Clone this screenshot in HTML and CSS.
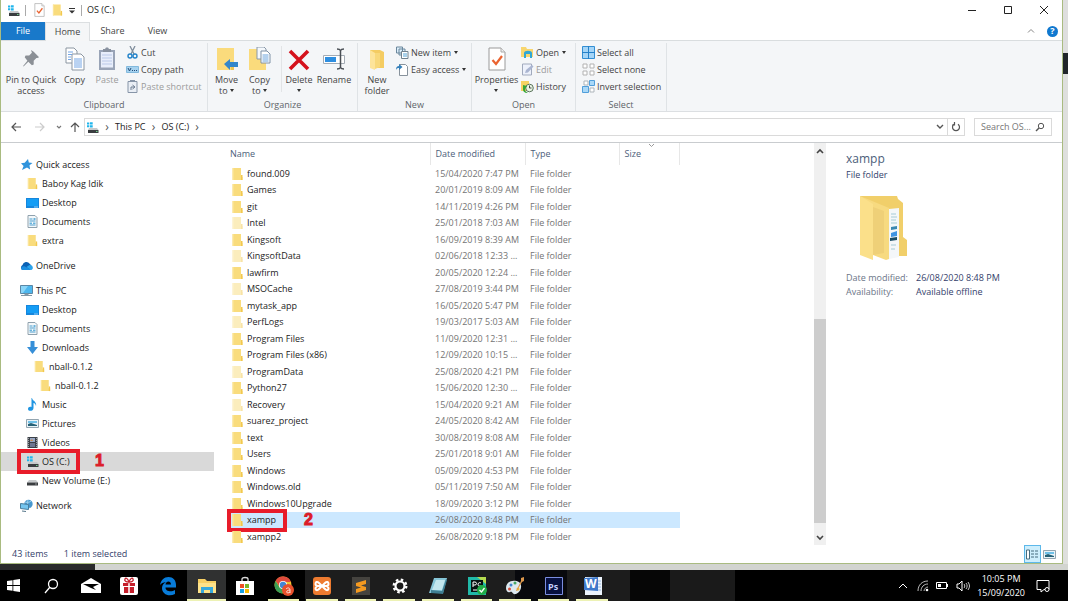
FILE: index.html
```html
<!DOCTYPE html>
<html lang="en">
<head>
<meta charset="utf-8">
<title>OS (C:)</title>
<link rel="stylesheet" href="styles.css">
</head>
<body>
<svg class="sprite" aria-hidden="true">
  <symbol id="folder" viewBox="0 0 12 14"><path d="M1 1h8.500v9H11v3H1z" fill="#f9dc7d"/><path d="M9.500 8h1.500v5H9.500z" fill="#f2c84f"/><path d="M1 1h1v12H1z" fill="#fbe7a2"/></symbol>
  <symbol id="drive" viewBox="0 0 13 13"><path d="M1 1.500h2.300v2H1zM4 1.200h2.700v2.300H4zM1 4.200h2.300v2H1zM4 4.200h2.700v2.300H4z" fill="#20b5ec"/><path d="M3 7h8l1.500 2H2z" fill="#c6c9cb"/><path d="M2 9h10.500v3H2z" fill="#3a3d40"/><path d="M10 10h1.500v1H10z" fill="#6fd18a"/></symbol>
  <symbol id="disk" viewBox="0 0 13 13"><path d="M3 6h7l2 2.500H1z" fill="#c6c9cb"/><path d="M1 8.500h11v3H1z" fill="#3a3d40"/><path d="M9 9.500h2v1H9z" fill="#8d9194"/></symbol>
  <symbol id="desktop" viewBox="0 0 13 13"><path d="M0 2h13v10H0z" fill="#1686dc"/><path d="M1 3h11v7H1z" fill="#149df5"/><path d="M8 10.500h4v1H8z" fill="#8ed0ff"/></symbol>
  <symbol id="document" viewBox="0 0 12 13"><path d="M1.500.5h7l2 2v10h-9z" fill="#f4f8fa" stroke="#8fa1ad"/><path d="M3 4h3M3 6h6M3 10h6" stroke="#4a9dce"/><path d="M3 7.500h2.500v1.500H3zM7 3h2v2H7zM6.500 7.500H9V9H6.500z" fill="#68b3dc"/></symbol>
  <symbol id="pc" viewBox="0 0 13 13"><path d="M.5 1.500h12v8H.5z" fill="#4db7ee" stroke="#5b87a5"/><path d="M1 2h7L3 9H1z" fill="#8ad5f8"/><path d="M5 10h3v1H5zM1 11.500h11" stroke="#8298a6" fill="#8298a6"/></symbol>
  <symbol id="star" viewBox="0 0 13 13"><path d="M8 1l.8 3.500 3.700.6-3 2.200.6 4.200-3.100-2.100L2 12l1.600-4L1 5.200l3.700-.5z" fill="#2f93dc"/></symbol>
  <symbol id="cloud" viewBox="0 0 13 13"><path d="M2.500 6a4 4 0 0 1 7.200-1.200A3.800 3.800 0 0 1 10 11H3a2.700 2.700 0 0 1-.5-5z" fill="#0a61b5"/><path d="M1 10c0-2 2-3.500 4-2.600L11.500 11H3a2 2 0 0 1-2-1z" fill="#1c8ee0"/><path d="M6.500 8l3-2c2.500-.4 4 2 3 4-.4.700-1 1-1.500 1z" fill="#2ba4ec"/></symbol>
  <symbol id="download" viewBox="0 0 13 13"><path d="M4.500 0h4v6H12l-5.500 7L1 6h3.500z" fill="#368fd8"/></symbol>
  <symbol id="music" viewBox="0 0 13 13"><path d="M6 0c.5 3 5 3.500 4 8-.3-2-1.500-2.800-2.500-3V10c0 3.500-5.500 3.700-5.500 1C2 9 4 8.300 5.500 9V0z" fill="#1f95e2"/></symbol>
  <symbol id="picture" viewBox="0 0 13 13"><path d="M.5 2.500h12v8H.5z" fill="#e9f3f8" stroke="#93a5b0"/><path d="M2 4h9v2H2z" fill="#6ec0e8"/><path d="M2 7l3-1 6 2v1H2z" fill="#246177"/></symbol>
  <symbol id="video" viewBox="0 0 13 13"><path d="M1.500 1h10v11h-10z" fill="#3c4148"/><path d="M4 2h5v4H4z" fill="#98a7c5"/><path d="M4 7h5v4H4z" fill="#6d7590"/><path d="M2.500 2v9M10.500 2v9" stroke="#9ba0a6" stroke-dasharray="1 1"/><path d="M4 5l2-2 1 2z" fill="#c88a4a"/></symbol>
  <symbol id="network" viewBox="0 0 13 13"><circle cx="8.500" cy="5" r="4.200" fill="#4898cf"/><path d="M5 3c3 1 5 0 6-1M8 1c-1 3 0 6 1 8" stroke="#9ed3ee" fill="none"/><path d="M.5 4.500l8 1v5l-8-1z" fill="#74c5ef" stroke="#487d9d"/><path d="M2 12l4 .5" stroke="#57788b"/></symbol>
  <symbol id="check" viewBox="0 0 18 24"><path d="M1 1h12l4 4v18H1z" fill="#fff" stroke="#9a9a9a"/><path d="M13 1v4h4" fill="#eee" stroke="#aaa"/><path d="M4.500 13l3.500 4 6-8" fill="none" stroke="#ea6330" stroke-width="2.200"/></symbol>
  <symbol id="pages" viewBox="0 0 20 24"><g fill="#fff" stroke="#8b96a1"><path d="M1 1h8l3 3v12H1z"/><path d="M7 7h9l3 3v13H7z"/></g><path d="M3 5h5M3 7.500h4M3 10h3M3 12.500h3M9 12h8M9 14h8M9 16h8M9 18h8M9 20h8" stroke="#75a6e5" fill="none"/></symbol>
</svg>

<div class="desktop">
  <div class="window">
    <header class="titlebar">
      <svg class="i13"><use href="#drive"/></svg><span class="vsep"></span>
      <button aria-label="Properties"><svg class="qa"><use href="#check"/></svg></button>
      <button aria-label="New folder"><svg class="qa"><use href="#folder"/></svg></button>
      <button class="more" aria-label="Customize toolbar"><svg width="6" height="7"><path d="M0 1.500h6" stroke="#333"/><path d="M0 3.500h6L3 6.500z" fill="#333"/></svg></button>
      <span class="vsep last"></span><h1>OS (C:)</h1>
      <div class="controls">
        <button aria-label="Minimize"><svg width="10" height="10"><path d="M1 5.500h8" stroke="#222"/></svg></button>
        <button aria-label="Maximize"><svg width="10" height="10"><path d="M1.500 1.500h7v7h-7z" stroke="#222" fill="none"/></svg></button>
        <button aria-label="Close"><svg width="10" height="10"><path d="M1 1l8 8M9 1L1 9" stroke="#222"/></svg></button>
      </div>
    </header>

    <nav class="tabs">
      <button class="file">File</button><button class="on">Home</button><button>Share</button><button>View</button>
      <div class="tabend">
        <button aria-label="Collapse ribbon"><svg width="8" height="6"><path d="M1 4.500l3-3 3 3" stroke="#888" fill="none"/></svg></button>
        <button class="help" aria-label="Help">?</button>
      </div>
    </nav>

    <section class="ribbon">
      <div class="group clipboard">
        <div class="tools">
          <button class="big pin"><svg viewBox="0 0 20 24"><path d="M13 4l6 6-2 1-1 0-3 3 0 4-2 1-4-4-5 5-1 0 5-6-3-4 1-2h4l3-3-1-3z" fill="#8b9096"/></svg><span>Pin to Quick<br>access</span></button>
          <button class="big copy"><svg><use href="#pages"/></svg><span>Copy</span></button>
          <button class="big paste" disabled><svg viewBox="0 0 20 24"><path d="M2 3h16v20H2z" fill="#99a4b7"/><path d="M4 5h12v15.500H4z" fill="#e8eefb"/><path d="M6 2h2l1-1.500h2L12 2h2v3H6z" fill="#8992a0"/><path d="M5 8h10M5 11h10M5 14h10M5 17h10" stroke="#bac9e8"/></svg><span>Paste</span></button>
          <div class="small">
            <button><svg viewBox="0 0 13 13"><path d="M4 0l4 8M9 0L5 8" stroke="#7f8d9c" stroke-width="1.300"/><g fill="none" stroke="#2483c9" stroke-width="1.400"><circle cx="4" cy="10" r="2"/><circle cx="9" cy="10" r="2"/></g></svg>Cut</button>
            <button><svg viewBox="0 0 13 13"><path d="M.5 3.500h12v6H.5z" fill="#a6d2ef" stroke="#82b9dd"/><path d="M2 5l1.500 3L5 5M6 7.500h1M8 7.500h1M10 7.500h1" stroke="#234d78" fill="none"/></svg>Copy path</button>
            <button disabled><svg viewBox="0 0 13 13"><path d="M2 1.500h9v11H2z" fill="#e9eef5" stroke="#8795a8"/><path d="M4 0h5v2H4z" fill="#8795a8"/><path d="M5 10V7h3M6.500 5L9 7 6.500 9" stroke="#6d7c90" fill="none"/></svg>Paste shortcut</button>
          </div>
        </div><h2>Clipboard</h2>
      </div>
      <div class="group organize">
        <div class="tools">
          <button class="big move"><svg viewBox="0 0 22 24"><path d="M1 1h17v22H1z" fill="#fadb7c"/><path d="M15 17h3v6h-3z" fill="#efc550"/><path d="M8 17l6-5v3h8v5h-8v3z" fill="#3387cb"/></svg><span>Move<br>to <i></i></span></button>
          <button class="big copyto"><svg viewBox="0 0 22 24"><path d="M0 2h17v21H0z" fill="#fadb7c"/><path d="M8 0h7l2 2v10H8z" fill="#f4f8fc" stroke="#8998a8"/><path d="M12 4h6l3 3v9h-9z" fill="#fff" stroke="#7e91a6"/><path d="M13.500 8h6M13.500 10h6M13.500 12h6M13.500 14h6" stroke="#6aa3dc"/></svg><span>Copy<br>to <i></i></span></button>
          <span class="toolsep"></span>
          <button class="big delete"><svg viewBox="0 0 22 24"><path d="M2 4l18 18M20 4L2 22" stroke="#d5121c" stroke-width="3.600"/></svg><span>Delete<br><i></i></span></button>
          <button class="big rename"><svg viewBox="0 0 22 24"><path d="M.5 8.500h21v8H.5z" fill="#fff" stroke="#a4acb5"/><path d="M2 10h11v5H2z" fill="#2e8ee0"/><path d="M14 2c2 0 3 .5 3.500 1.500C18 2.500 19 2 21 2M17.500 3v18M14 22c2 0 3-.5 3.500-1.500.5 1 1.500 1.500 3.500 1.500" stroke="#4a4f55" stroke-width="1.500" fill="none"/></svg><span>Rename</span></button>
        </div><h2>Organize</h2>
      </div>
      <div class="group new">
        <div class="tools">
          <button class="big"><svg viewBox="0 0 20 24"><path d="M3 3h10l4 2v16H3z" fill="#f4cc62"/><path d="M3 3l5 3v17l-5-2z" fill="#fde49a"/><path d="M8 6h5v14l-5 2z" fill="#f8d87a"/></svg><span>New<br>folder</span></button>
          <div class="small">
            <button><svg viewBox="0 0 13 13"><path d="M.5 1h6v6h-6zM3 3h6v6H3z" fill="#dceefa" stroke="#6a879c"/><path d="M5.500 5.500h6.500v7H5.500z" fill="#fff" stroke="#71828e"/><path d="M7 8h4M7 10h4" stroke="#54a4d6"/></svg>New item <i></i></button>
            <button><svg viewBox="0 0 13 13"><path d="M3.500 1.500h6l2 2v9h-8z" fill="#fff" stroke="#87929c"/><path d="M0 7c0-3 1-4 3-4V1l3.500 3L3 7V5C2 5 1 5 0 7z" fill="#337fb9"/></svg>Easy access <i></i></button>
          </div>
        </div><h2>New</h2>
      </div>
      <div class="group open">
        <div class="tools">
          <button class="big props"><svg><use href="#check"/></svg><span>Properties<br><i></i></span></button>
          <div class="small">
            <button><svg viewBox="0 0 13 13"><path d="M0 1h5l1 2h6v8H0z" fill="#f8d66f"/><path d="M3 12V7c0-3 8-3 8 0v5H9V8H5v4z" fill="#31a6d4"/></svg>Open <i></i></button>
            <button disabled><svg viewBox="0 0 13 13"><path d="M1.500 1h9v11h-9z" fill="#edf1fb" stroke="#a1aabd"/><path d="M4 10l1-3 6-5 1.500 1.500-5.500 6z" fill="#aab5d1"/></svg>Edit</button>
            <button><svg viewBox="0 0 13 13"><path d="M0 1h8v10H0z" fill="#f6d263"/><circle cx="8.500" cy="8" r="3.800" fill="#e9f5e4" stroke="#5a735b"/><path d="M8.500 5.500V8h2" stroke="#444" fill="none"/><path d="M2 5l4 1-2 3c0 2 1 3 3 4-4 0-5-2-5-4z" fill="#35a537"/></svg>History</button>
          </div>
        </div><h2>Open</h2>
      </div>
      <div class="group select">
        <div class="tools"><div class="small">
          <button><svg viewBox="0 0 13 13"><path d="M.5.5h12v12H.5z" fill="#a5d5f7" stroke="#338fd3"/><path d="M6.500 0v13M0 6.500h13" stroke="#2581c9"/></svg>Select all</button>
          <button><svg viewBox="0 0 13 13"><g fill="#fff" stroke="#b2b2b2"><path d="M1 1h4v4H1zM8 1h4v4H8zM1 8h4v4H1zM8 8h4v4H8z"/></g></svg>Select none</button>
          <button><svg viewBox="0 0 13 13"><path d="M2 1h4v4H2zM8 8h4v4H8z" fill="#fff" stroke="#adb5bb"/><path d="M7.500.5h5v5h-5zM.5 6.500h6v6h-6z" fill="#a9d8f8" stroke="#519fda"/></svg>Invert selection</button>
        </div></div><h2>Select</h2>
      </div>
    </section>

    <div class="address">
      <button aria-label="Back"><svg width="11" height="10"><path d="M10 5H1M5 1L1 5l4 4" fill="none" stroke="#555" stroke-width="1.200"/></svg></button>
      <button aria-label="Forward"><svg width="11" height="10"><path d="M1 5h9M6 1l4 4-4 4" fill="none" stroke="#ccc" stroke-width="1.200"/></svg></button>
      <button aria-label="Recent locations"><svg width="6" height="5"><path d="M1 1l2 2 2-2" fill="none" stroke="#777" stroke-width="1.200"/></svg></button>
      <button aria-label="Up"><svg width="10" height="10"><path d="M5 10V1M1 5l4-4 4 4" fill="none" stroke="#555" stroke-width="1.200"/></svg></button>
      <div class="path">
        <svg class="i13"><use href="#drive"/></svg><b>›</b><a href="#pc">This PC</a><b>›</b><a href="#c">OS (C:)</a><b>›</b>
        <button class="drop" aria-label="Previous locations"><svg width="8" height="6"><path d="M1 1l3 3 3-3" fill="none" stroke="#555" stroke-width="1.400"/></svg></button>
        <button class="refresh" aria-label="Refresh"><svg width="10" height="10"><path d="M7 2.300A3.500 3.500 0 1 1 3 2.300M3.500 0v3H1" fill="none" stroke="#555" stroke-width="1.200"/></svg></button>
      </div>
      <label class="search"><input type="text" aria-label="Search" placeholder="Search OS..."><svg width="10" height="10"><circle cx="6" cy="4" r="2.700" fill="none" stroke="#555"/><path d="M4 6L1 9" stroke="#555" stroke-width="1.400"/></svg></label>
    </div>

    <main>
      <nav class="tree">
        <a href="#q"><svg><use href="#star"/></svg>Quick access</a>
        <a class="l1" href="#b"><svg><use href="#folder"/></svg>Baboy Kag Idik</a>
        <a class="l1" href="#d"><svg><use href="#desktop"/></svg>Desktop</a>
        <a class="l1" href="#doc"><svg><use href="#document"/></svg>Documents</a>
        <a class="l1" href="#e"><svg><use href="#folder"/></svg>extra</a>
        <a class="top" href="#o"><svg><use href="#cloud"/></svg>OneDrive</a>
        <a class="top" href="#pc"><svg><use href="#pc"/></svg>This PC</a>
        <a class="l1" href="#d"><svg><use href="#desktop"/></svg>Desktop</a>
        <a class="l1" href="#doc"><svg><use href="#document"/></svg>Documents</a>
        <a class="l1" href="#dl"><svg><use href="#download"/></svg>Downloads</a>
        <a class="l2" href="#n"><svg><use href="#folder"/></svg>nball-0.1.2</a>
        <a class="l3" href="#n"><svg><use href="#folder"/></svg>nball-0.1.2</a>
        <a class="l1" href="#m"><svg><use href="#music"/></svg>Music</a>
        <a class="l1" href="#p"><svg><use href="#picture"/></svg>Pictures</a>
        <a class="l1" href="#v"><svg><use href="#video"/></svg>Videos</a>
        <a class="l1 current" href="#c"><svg><use href="#drive"/></svg>OS (C:)<span class="mark one"></span><strong class="num n1">1</strong></a>
        <a class="l1" href="#ev"><svg><use href="#disk"/></svg>New Volume (E:)</a>
        <a class="top" href="#net"><svg><use href="#network"/></svg>Network</a>
      </nav>

      <section class="list">
        <table>
          <thead><tr><th class="cn">Name</th><th class="cd">Date modified</th><th class="ct">Type</th><th class="cs">Size<svg class="sort" width="7" height="4"><path d="M1 0l2.500 2.500L6 0" fill="none" stroke="#999"/></svg></th></tr></thead>
          <tbody>
            <tr><td><svg><use href="#folder"/></svg>found.009</td><td>15/04/2020 7:47 PM</td><td>File folder</td><td></td></tr>
            <tr><td><svg><use href="#folder"/></svg>Games</td><td>20/01/2019 8:09 AM</td><td>File folder</td><td></td></tr>
            <tr><td><svg><use href="#folder"/></svg>git</td><td>14/11/2019 4:26 PM</td><td>File folder</td><td></td></tr>
            <tr class="dim"><td><svg><use href="#folder"/></svg>Intel</td><td>25/01/2018 7:03 AM</td><td>File folder</td><td></td></tr>
            <tr><td><svg><use href="#folder"/></svg>Kingsoft</td><td>16/09/2019 8:39 AM</td><td>File folder</td><td></td></tr>
            <tr class="dim"><td><svg><use href="#folder"/></svg>KingsoftData</td><td>02/06/2018 12:33 ...</td><td>File folder</td><td></td></tr>
            <tr><td><svg><use href="#folder"/></svg>lawfirm</td><td>20/05/2020 12:24 ...</td><td>File folder</td><td></td></tr>
            <tr class="dim"><td><svg><use href="#folder"/></svg>MSOCache</td><td>27/08/2019 3:44 PM</td><td>File folder</td><td></td></tr>
            <tr><td><svg><use href="#folder"/></svg>mytask_app</td><td>16/05/2020 5:47 PM</td><td>File folder</td><td></td></tr>
            <tr class="dim"><td><svg><use href="#folder"/></svg>PerfLogs</td><td>19/03/2017 5:03 AM</td><td>File folder</td><td></td></tr>
            <tr><td><svg><use href="#folder"/></svg>Program Files</td><td>11/09/2020 12:31 ...</td><td>File folder</td><td></td></tr>
            <tr><td><svg><use href="#folder"/></svg>Program Files (x86)</td><td>12/09/2020 10:15 ...</td><td>File folder</td><td></td></tr>
            <tr class="dim"><td><svg><use href="#folder"/></svg>ProgramData</td><td>25/08/2020 4:21 PM</td><td>File folder</td><td></td></tr>
            <tr><td><svg><use href="#folder"/></svg>Python27</td><td>15/06/2020 12:30 ...</td><td>File folder</td><td></td></tr>
            <tr class="dim"><td><svg><use href="#folder"/></svg>Recovery</td><td>15/04/2020 9:21 AM</td><td>File folder</td><td></td></tr>
            <tr><td><svg><use href="#folder"/></svg>suarez_project</td><td>24/05/2020 8:42 AM</td><td>File folder</td><td></td></tr>
            <tr><td><svg><use href="#folder"/></svg>text</td><td>30/08/2019 8:08 AM</td><td>File folder</td><td></td></tr>
            <tr><td><svg><use href="#folder"/></svg>Users</td><td>25/01/2018 9:01 AM</td><td>File folder</td><td></td></tr>
            <tr><td><svg><use href="#folder"/></svg>Windows</td><td>05/09/2020 4:53 PM</td><td>File folder</td><td></td></tr>
            <tr><td><svg><use href="#folder"/></svg>Windows.old</td><td>05/11/2019 7:50 AM</td><td>File folder</td><td></td></tr>
            <tr><td><svg><use href="#folder"/></svg>Windows10Upgrade</td><td>18/09/2020 3:12 PM</td><td>File folder</td><td></td></tr>
            <tr class="selected"><td><svg><use href="#folder"/></svg>xampp<span class="mark two"></span><strong class="num n2">2</strong></td><td>26/08/2020 8:48 PM</td><td>File folder</td><td></td></tr>
            <tr><td><svg><use href="#folder"/></svg>xampp2</td><td>26/08/2020 9:18 PM</td><td>File folder</td><td></td></tr>
          </tbody>
        </table>
      </section>

      <div class="scroll">
        <button aria-label="Scroll up"><svg width="8" height="6"><path d="M1 5l3-3 3 3" fill="none" stroke="#444" stroke-width="1.600"/></svg></button>
        <div class="track"><div class="thumb"></div></div>
        <button aria-label="Scroll down"><svg width="8" height="6"><path d="M1 1l3 3 3-3" fill="none" stroke="#444" stroke-width="1.600"/></svg></button>
      </div>

      <aside class="details">
        <h2>xampp</h2>
        <p>File folder</p>
        <svg viewBox="0 0 50 66"><path d="M2 1h37l1 3 5 4v34l4 3v16H26z" fill="#f1cf6a"/><path d="M31 14l10-1v49l-10 2z" fill="#f4f7f9"/><path d="M33 19h5M33 22h6M33 25h5M33 28h6M33 50h5M33 54h4" stroke="#a6cbd6"/><path d="M33 32l6-1v3l-6 1z" fill="#3a88b2"/><path d="M33 38l6-2v5l-6 1z" fill="#3d94e2"/><path d="M32 43l7-1v3l-7 1z" fill="#194d66"/><path d="M2 1l29 12v51l-3 1-13-5z" fill="#f7da80"/><path d="M2 1l13 8v56L2 60z" fill="#fbe08a"/><path d="M15 12l11 4v42l-11 2z" fill="#efd078"/></svg>
        <dl><dt>Date modified:</dt><dd>26/08/2020 8:48 PM</dd><dt>Availability:</dt><dd>Available offline</dd></dl>
      </aside>
    </main>

    <footer class="status">
      <span>43 items</span><span>1 item selected</span>
      <div class="views">
        <button class="active" aria-label="Details view"><svg width="13" height="11"><path d="M.5 1h3v9h-3zM5 2h3M5 5h3M5 8h3M9 2h3M9 5h3M9 8h3" stroke="#466c7e" fill="#fff"/></svg></button>
        <button aria-label="Large icons view"><svg class="i13"><use href="#picture"/></svg></button>
      </div>
    </footer>
  </div>
  <div class="behind"></div>
</div>

<div class="taskbar">
  <button class="start" aria-label="Start"><svg width="13" height="13" viewBox="0 0 13 13"><path d="M0 2l5.500-.8V6H0zM6.300 1L13 0v6H6.300zM0 7h5.500v4.800L0 11zM6.300 7H13v6l-6.700-1z" fill="#fff"/></svg></button>
  <div class="apps">
    <button aria-label="Search"><svg viewBox="0 0 20 20"><circle cx="11" cy="8" r="4.500" fill="none" stroke="#fff" stroke-width="1.300"/><path d="M8 11l-5 6" stroke="#fff" stroke-width="1.300"/></svg></button>
    <button aria-label="Mail"><svg viewBox="0 0 20 20"><path d="M0 8l10-6 10 6v9H0z" fill="#fff"/><path d="M2 8h16l-6 3 3 3-5-2z" fill="#000"/></svg></button>
    <button aria-label="Gifts"><svg viewBox="0 0 20 20"><rect x="1" y="1" width="18" height="18" rx="2" fill="#fff"/><path d="M4 7h12v3H4zM5 11h10v6H5z" fill="#c51f2c"/><path d="M10 7v10" stroke="#fff" stroke-width="1.500"/><path d="M10 6C7 6 5 5 6 3s3 0 4 3c1-3 3-5 4-3s-1 3-4 3z" fill="none" stroke="#c51f2c" stroke-width="1.300"/></svg></button>
    <button aria-label="Edge"><svg viewBox="0 0 20 20"><path d="M2 9C3 4 6 1 10.500 1 15 1 18 4 18 9v2.500H7.500c0 4 6 5 9.500 2.500v4c-6 3-13 .5-13-6 0-3 2-5 4-6-3 .4-5 1.500-6 3zm5.500-.5H13c0-4-5-4-5.500 0z" fill="#087bd8"/></svg></button>
    <button class="focus" aria-label="File Explorer"><svg viewBox="0 0 20 20"><path d="M1 3h7l2 2h9v12H1z" fill="#f6cf64"/><path d="M1 7h18v10H1z" fill="#fde28a"/><path d="M4 17v-6h12v6h-3v-3H7v3z" fill="#36a9dd"/></svg></button>
    <button aria-label="Store"><svg viewBox="0 0 20 20"><path d="M7 6V3c0-2 6-2 6 0v3" fill="none" stroke="#ddd" stroke-width="1.300"/><path d="M1 5h18v14H1z" fill="#fff"/><path d="M5 8h4v4H5z" fill="#ee5125"/><path d="M10 8h4v4h-4z" fill="#79b729"/><path d="M5 13h4v4H5z" fill="#169fe3"/><path d="M10 13h4v4h-4z" fill="#fbb900"/></svg></button>
    <button class="run" aria-label="Chrome"><svg viewBox="0 0 20 20"><circle cx="9" cy="9" r="8.500" fill="#efc32e"/><path d="M1.600 5A8.500 8.500 0 0 1 17 6H9L6 11z" fill="#df4b3d"/><path d="M1.600 5A8.500 8.500 0 0 0 8 17.500l4-5.500H6z" fill="#3a9f55"/><circle cx="9" cy="9" r="4" fill="#fff"/><circle cx="9" cy="9" r="3.200" fill="#4285d4"/><circle cx="14" cy="14" r="6" fill="#e8502c"/><path d="M12 13c2-2 4-1 4 1v3M16 14c-4 0-4 3-2 3l2-1" stroke="#fff" fill="none" stroke-width=".8"/></svg></button>
    <button class="run" aria-label="XAMPP"><svg viewBox="0 0 20 20"><rect x="1" y="1" width="18" height="18" rx="3" fill="#ee7b30"/><path d="M10 10L7 7C5 5 3.500 6 3.500 8S5 10 6 10h8c1 0 2.500 0 2.500-2S15 5 13 7l-6 6c-2 2-3.500 1-3.500-.5S5 10 6 10h8c1 0 2.500 1 2.500 2.500S15 15 13 13z" fill="none" stroke="#fff" stroke-width="2"/></svg></button>
    <button class="run" aria-label="Sublime Text"><svg viewBox="0 0 20 20"><path d="M1 1h18v18H1z" fill="#45433f"/><path d="M15 4v4l-5 1.500 5 1.500v3L5 17v-4l5-1.500L5 10V7z" fill="#f59a20"/></svg></button>
    <button class="run" aria-label="Settings"><svg viewBox="0 0 20 20"><circle cx="10" cy="10" r="4.500" fill="none" stroke="#fff" stroke-width="2.200"/><circle cx="10" cy="10" r="6.300" fill="none" stroke="#fff" stroke-width="2.300" stroke-dasharray="2.500 2.448"/></svg></button>
    <button class="run" aria-label="Notepad"><svg viewBox="0 0 20 20"><path d="M6 2h13l-4 15H1z" fill="#87c6d8"/><path d="M8 4h9l-3 10H4z" fill="#c3e7ee"/><path d="M3 14l11 1 4-12 1 1-4 14-12-1z" fill="#407f93"/></svg></button>
    <button class="run" aria-label="PyCharm"><svg viewBox="0 0 20 20"><path d="M1 1h18v18H1z" fill="#21b9a8"/><path d="M10 1h9v7z" fill="#b5db50"/><path d="M4 4h12v12H4z" fill="#071311"/><path d="M6 11V6h2c2 0 2 3 0 3H6M14 7c-3-2-5 4 0 3M6 14h4" stroke="#fff" fill="none"/><circle cx="15" cy="14" r="5" fill="#20ae46"/><path d="M12.500 14l2 2 3-4" fill="none" stroke="#fff" stroke-width="1.300"/></svg></button>
    <button class="run" aria-label="Paint"><svg viewBox="0 0 20 20"><path d="M1 12c0-7 8-9 13-6 4 3 2 10-3 12-4 1-3-3-6-2-2 1-4-1-4-4z" fill="#dce8ef"/><circle cx="6" cy="9" r="1.500" fill="#3f84cf"/><circle cx="10" cy="7" r="1.500" fill="#44a764"/><circle cx="4.500" cy="13" r="1.500" fill="#d54e3b"/><circle cx="13" cy="13" r="1.500" fill="#edb830"/><path d="M11 15l5-10 0-3 3-1 0 4-2 1-5 9z" fill="#dd984c"/></svg></button>
    <button class="run" aria-label="Photoshop"><svg viewBox="0 0 20 20"><path d="M1.500 1.500h17v17h-17z" fill="#07103f" stroke="#7a8de0"/><text x="4" y="14" class="ps">Ps</text></svg></button>
    <button class="run" aria-label="Word"><svg viewBox="0 0 20 20"><path d="M2 1h17v18H2z" fill="#edf4fc"/><path d="M15 5h3M15 8h3M15 11h3M15 14h3" stroke="#98b8df"/><path d="M1 2l14-1v14L1 14z" fill="#3f79cb"/><text x="2" y="12" class="word">W</text></svg></button>
  </div>
  <div class="tray">
    <button aria-label="Hidden icons"><svg width="10" height="8"><path d="M1 6l4-4 4 4" stroke="#fff" fill="none"/></svg></button>
    <button aria-label="Network"><svg width="12" height="12"><path d="M1 11C1 5 5 1 11 1M4 11c0-4 3-7 7-7M7 11c0-2 2-4 4-4" stroke="#bbb" fill="none"/><circle cx="10" cy="10" r="1.300" fill="#fff"/></svg></button>
    <button aria-label="Battery"><svg width="13" height="9"><path d="M.5 1.500h10v6H.5z" fill="none" stroke="#fff"/><path d="M2 3h3v3H2zM11 3h1v3h-1z" fill="#fff"/></svg></button>
    <button aria-label="Volume"><svg width="14" height="12"><path d="M1 4h2l3-3v10L3 8H1z" fill="none" stroke="#fff"/><path d="M8 4c1 1 1 3 0 4M10 3c1.500 2 1.500 4 0 6M12 2c2 3 2 5 0 8" stroke="#ccc" fill="none"/></svg></button>
    <time>10:05 PM<br>15/09/2020</time>
    <button aria-label="Notifications"><svg width="14" height="14"><path d="M1 1.500h12v9H8l-3 2.500v-2.500H1z" fill="none" stroke="#fff"/><circle cx="11" cy="10.500" r="2" fill="#000" stroke="#fff"/></svg></button>
  </div>
</div>
</body>
</html>
```

FILE: styles.css
```css
* { box-sizing: border-box; }
body {
  margin: 0;
  min-height: 100vh;
  display: flex;
  flex-direction: column;
  padding-bottom: 2px;
  background: #fff;
  color: #222;
  font: 9px/12px "Open Sans", "Noto Sans", sans-serif;
}
button, input { font: inherit; color: inherit; border: 0; padding: 0; margin: 0; background: none; }
button { display: flex; align-items: center; justify-content: center; white-space: nowrap; }
a { color: inherit; text-decoration: none; }
h1, h2, p, dl, dd { margin: 0; font-size: 9px; font-weight: 400; }
svg { flex: none; display: block; }
.sprite { position: absolute; width: 0; height: 0; }
.i13 { width: 13px; height: 13px; }

.desktop {
  flex: 1;
  display: flex;
  flex-direction: column;
  padding-right: 5px;
  background: linear-gradient(#dedede 53px, #20252a 53px, #20252a 74px, #dedfdd 74px);
}
.window {
  flex: 1;
  display: flex;
  flex-direction: column;
  background: #fff;
  border: 1px solid #a9bb80;
  border-top: 0;
}
.behind { height: 6px; margin-right: -5px; background: linear-gradient(90deg, #292a2a 95px, #d2d4d0 95px); }

.titlebar { display: flex; align-items: center; height: 22px; padding: 0 0 2px 6px; }
.titlebar h1 { font-size: 9px; }
.vsep { width: 1px; height: 11px; margin: 0 4px 0 5px; background: #aaa; }
.titlebar > button { width: 18px; }
.titlebar > .more { width: 12px; }
.last { margin: 0 5px 0 3px; }
.qa { width: 11px; height: 14px; }
.controls { display: flex; margin-left: auto; }
.controls button { width: 36px; height: 20px; }

.tabs { display: flex; height: 19px; border-bottom: 1px solid #d9dddf; color: #444; }
.tabs > button { width: 45px; height: 18px; }
.tabs > .file { width: 44px; background: #1979ca; color: #fff; }
.tabs > .on { height: 19px; background: #f5f6f7; border: 1px solid #dcdfe1; border-bottom: 0; }
.tabend { display: flex; align-items: center; gap: 12px; margin-left: auto; padding-right: 4px; }
.help { width: 11px; height: 11px; border-radius: 50%; background: #0f78cf; color: #fff; font-weight: 700; }

.ribbon { display: flex; height: 71px; background: #f4f6f8; border-bottom: 1px solid #dcdfe2; color: #444; }
.group { display: flex; flex-direction: column; border-right: 1px solid #dfe3e6; margin: 2px 0 0; }
.clipboard { width: 207px; }
.organize { width: 150px; }
.new { width: 114px; }
.open { width: 104px; }
.select { width: 91px; }
.group h2 { text-align: center; color: #606468; }
.tools { display: flex; height: 56px; align-items: flex-start; }
.big { flex-direction: column; justify-content: flex-start; width: 34px; padding-top: 4px; line-height: 11px; }
.big svg { width: 22px; height: 24px; margin-bottom: 3px; }
.big span { display: block; text-align: center; }
.pin { width: 60px; }
.pin svg { width: 18px; }
.copy { width: 27px; }
.paste { width: 38px; }
.organize .big { width: 33px; }
.organize .tools { padding-left: 2px; }
.organize .delete { width: 34px; }
.organize .rename { width: 36px; }
.toolsep { width: 1px; height: 46px; margin: 3px 0 0 5px; background: #e2e4e6; }
.new .big { width: 38px; }
.props { width: 49px; }
.small { display: flex; flex-direction: column; padding-top: 1px; }
.small button { height: 17px; justify-content: flex-start; gap: 2px; }
.small svg { width: 13px; height: 13px; }
.select .small { padding-left: 6px; }
.ribbon i { display: inline-block; border: 2px solid transparent; border-top: 3px solid #333; border-bottom: 0; vertical-align: 2px; }
.small i { margin-left: 1px; }
button:disabled { color: #9b9b9b; }
.group h2 { padding-top: 1px; }

.address { display: flex; align-items: center; height: 31px; padding: 0 10px 0 9px; border-bottom: 1px solid #c9cccf; }
.address > button { width: 12px; margin-right: 11px; }
.address > button:nth-of-type(3) { width: 6px; margin-right: 7px; }
.address > button:nth-of-type(4) { margin-right: 3px; }
.path { flex: 1; display: flex; align-items: center; height: 18px; padding-left: 1px; border: 1px solid #dadada; }
.path b { width: 16px; text-align: center; font-size: 12px; color: #555; font-weight: 400; }
.drop { margin-left: auto; width: 15px; }
.refresh { width: 17px; height: 16px; border-left: 1px solid #dadada; }
.search { display: flex; align-items: center; width: 78px; height: 18px; margin-left: 9px; padding: 0 6px; border: 1px solid #dadada; }
.search input { flex: 1; min-width: 0; outline: 0; }
.search input::placeholder { color: #777; opacity: 1; }

main { flex: 1; display: flex; }
.tree { width: 213px; padding-top: 12px; }
.tree a { position: relative; display: flex; align-items: center; gap: 3px; height: 19px; padding-left: 19px; white-space: nowrap; }
.tree svg { width: 13px; height: 13px; }
.tree .top { margin-top: 6px; }
.tree .l1 { padding-left: 25px; }
.tree .l2 { padding-left: 32px; }
.tree .l3 { padding-left: 38px; }
.tree .current { background: #d9d9d9; }

.list { flex: 1; padding-left: 13px; }
table { border-collapse: collapse; table-layout: fixed; width: 453px; }
th { position: relative; height: 22px; padding: 0 5px; text-align: left; font-weight: 400; color: #4c607a; border-right: 1px solid #e7e7e7; }
.cn { width: 203px; padding-left: 3px; }
.cd { width: 95px; }
.ct { width: 94px; }
.sort { position: absolute; left: 28px; top: 1px; }
td { height: 17px; padding: 0 5px; line-height: 12px; color: #747474; white-space: nowrap; }
tr:nth-child(even) td { height: 16px; }
td:first-child { position: relative; display: flex; align-items: center; gap: 3px; padding-left: 4px; color: #222; }
td svg { width: 13px; height: 14px; }
.dim svg { opacity: .5; }
.selected { background: #cce8ff; }

.mark { position: absolute; border: 4px solid #e81c2a; }
.one { left: 16px; top: -3px; width: 63px; height: 25px; }
.two { left: 0; top: -3px; width: 60px; height: 23px; }
.num { position: absolute; color: #dc1d2a; font: 700 16px/18px "Liberation Sans", Arial, sans-serif; -webkit-text-stroke: 1px #dc1d2a; }
.n1 { left: 94px; top: 0; }
.n2 { left: 77px; top: -1px; }

.scroll { width: 12px; display: flex; flex-direction: column; background: #f0f0f0; }
.scroll button { height: 15px; }
.track { flex: 1; display: flex; flex-direction: column; justify-content: flex-end; padding-bottom: 7px; }
.thumb { height: 56%; background: #cdcdcd; }
.details { width: 236px; padding: 8px 20px; color: #34416b; }
.details h2 { font-size: 12px; line-height: 16px; color: #4c607a; }
.details p { margin-top: 2px; }
.details svg { width: 50px; height: 66px; margin: 14px 0 10px 12px; }
.details dl { display: grid; grid-template-columns: 70px auto; line-height: 14px; }
.details dt { color: #6b7587; }

.status { display: flex; align-items: center; gap: 16px; height: 18px; padding: 0 6px 0 11px; color: #34416b; }
.views { display: flex; gap: 2px; margin-left: auto; }
.views .active { width: 17px; height: 18px; border: 1px solid #5db8ea; background: #cdeefc; }

.taskbar {
  display: flex;
  height: 31px;
  color: #fff;
  background: linear-gradient(90deg, #000 305px, #1d1d1d 305px, #1d1d1d 515px, #08090d 515px, #08090d 567px, #1c1c1c 567px, #1c1c1c 630px, #060606 630px, #060606 670px, #1a1a1a 670px, #1a1a1a 735px, #000 735px);
}
.start { width: 33px; padding-right: 7px; }
.apps { display: grid; grid-template-columns: repeat(15, 1fr); width: 579px; }
.apps svg { width: 20px; height: 20px; }
.run, .focus { position: relative; }
.focus { background: #303131; }
.run::after, .focus::after { content: ""; position: absolute; left: 3px; right: 4px; bottom: 0; height: 2px; background: #edf2b5; }
.focus::after { left: 0; right: 0; }
.ps { font: 700 9px "Open Sans", sans-serif; fill: #c3cdfc; }
.word { font: 700 12px "Open Sans", sans-serif; fill: #fff; }
.tray { display: flex; align-items: center; gap: 7px; margin-left: auto; padding-right: 18px; }
.tray button:first-child { margin-right: 2px; }
.tray time { text-align: center; line-height: 14px; margin: 0 4px 0 0; }
```
